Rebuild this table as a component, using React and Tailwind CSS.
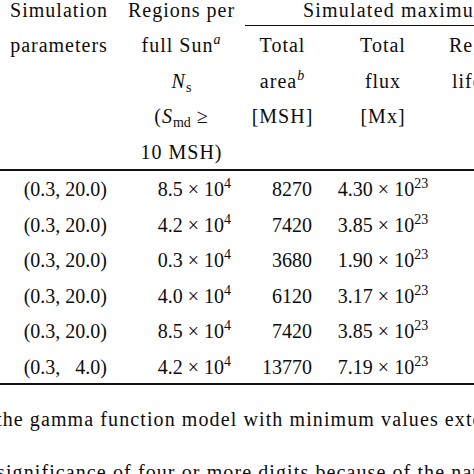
import React from "react";

function Sup({ children }) {
  return <span className="text-[14px] leading-[0] align-[8px]">{children}</span>;
}
function SupI({ children }) {
  return <span className="text-[14px] leading-[0] italic align-[8px]">{children}</span>;
}
function Sub({ children }) {
  return <span className="text-[14px] leading-[0] align-[-4px] tracking-normal">{children}</span>;
}

function Sci({ m, e }) {
  return (
    <span>
      {m}
      <span className="mx-[5px]">×</span>10
      <Sup>{e}</Sup>
    </span>
  );
}

const head = "grid grid-cols-[118px_127px_77px_122px_200px] h-[35.5px] leading-[35.5px] tracking-[1px]";
const row = "grid grid-cols-[118px_127px_77px_122px_200px] h-[35.5px] leading-[37.5px]";

const data = [
  ["20.0", "8.5", "8270", "4.30"],
  ["20.0", "4.2", "7420", "3.85"],
  ["20.0", "0.3", "3680", "1.90"],
  ["20.0", "4.0", "6120", "3.17"],
  ["20.0", "8.5", "7420", "3.85"],
  ["4.0", "4.2", "13770", "7.19"],
];

export default function App() {
  return (
    <div className="w-[474px] h-[474px] overflow-hidden bg-white text-[#0d0d0d] text-[20px] font-['Liberation_Serif','Times_New_Roman',serif]">
      <div className="w-[644px] mt-[-7.5px]">
        {/* header row 1 */}
        <div className={head}>
          <div className="text-center">Simulation</div>
          <div className="text-center">Regions per</div>
          <div className="col-span-3 self-start h-[33.5px] border-b-[1.5px] border-[#111] pl-[58px] whitespace-nowrap tracking-[1.2px]">
            Simulated maximum values
          </div>
        </div>
        {/* header row 2 */}
        <div className={head}>
          <div className="text-center">parameters</div>
          <div className="text-center">
            full Sun<SupI>a</SupI>
          </div>
          <div className="text-center pr-[2px]">Total</div>
          <div className="text-center">Total</div>
          <div className="pl-[5px]">Region</div>
        </div>
        {/* header row 3 */}
        <div className={head}>
          <div />
          <div className="text-center">
            <span className="italic">N</span>
            <Sub>s</Sub>
          </div>
          <div className="text-center pr-[2px]">
            area<SupI>b</SupI>
          </div>
          <div className="text-center">flux</div>
          <div className="pl-[8px]">lifetime</div>
        </div>
        {/* header row 4 */}
        <div className={head}>
          <div />
          <div className="text-center">
            (<span className="italic">S</span>
            <Sub>md</Sub>
            <span className="ml-[6px]">≥</span>
          </div>
          <div className="text-center pr-[2px]">[MSH]</div>
          <div className="text-center">[Mx]</div>
          <div />
        </div>
        {/* header row 5 */}
        <div className="grid grid-cols-[118px_127px_77px_122px_200px] h-[34.5px] leading-[35.5px] tracking-[1px]">
          <div />
          <div className="text-center">10 MSH)</div>
          <div />
          <div />
          <div />
        </div>
        <div className="h-[2px] bg-[#111]" />

        {data.map((d, i) => (
          <div key={i} className={i === data.length - 1 ? "grid grid-cols-[118px_127px_77px_122px_200px] h-[34px] leading-[37.5px]" : row}>
            <div className="text-right pr-[11px] whitespace-nowrap">
              (0.3,{" "}
              {d[0] === "4.0" ? <span className="invisible">2</span> : null}
              {d[0]})
            </div>
            <div className="text-right pr-[14px] whitespace-nowrap">
              <Sci m={d[1]} e="4" />
            </div>
            <div className="text-right pr-[10px]">{d[2]}</div>
            <div className="text-center whitespace-nowrap">
              <Sci m={d[3]} e="23" />
            </div>
            <div />
          </div>
        ))}
        <div className="h-[2px] bg-[#111]" />
      </div>

      <p className="mt-[19.75px] leading-[30px] ml-[-4px] whitespace-nowrap tracking-[1.1px]">
        the gamma function model with minimum values extended
      </p>
      <p className="mt-[23px] leading-[30px] ml-[-3px] whitespace-nowrap tracking-[1.1px]">
        significance of four or more digits because of the nature
      </p>
    </div>
  );
}
